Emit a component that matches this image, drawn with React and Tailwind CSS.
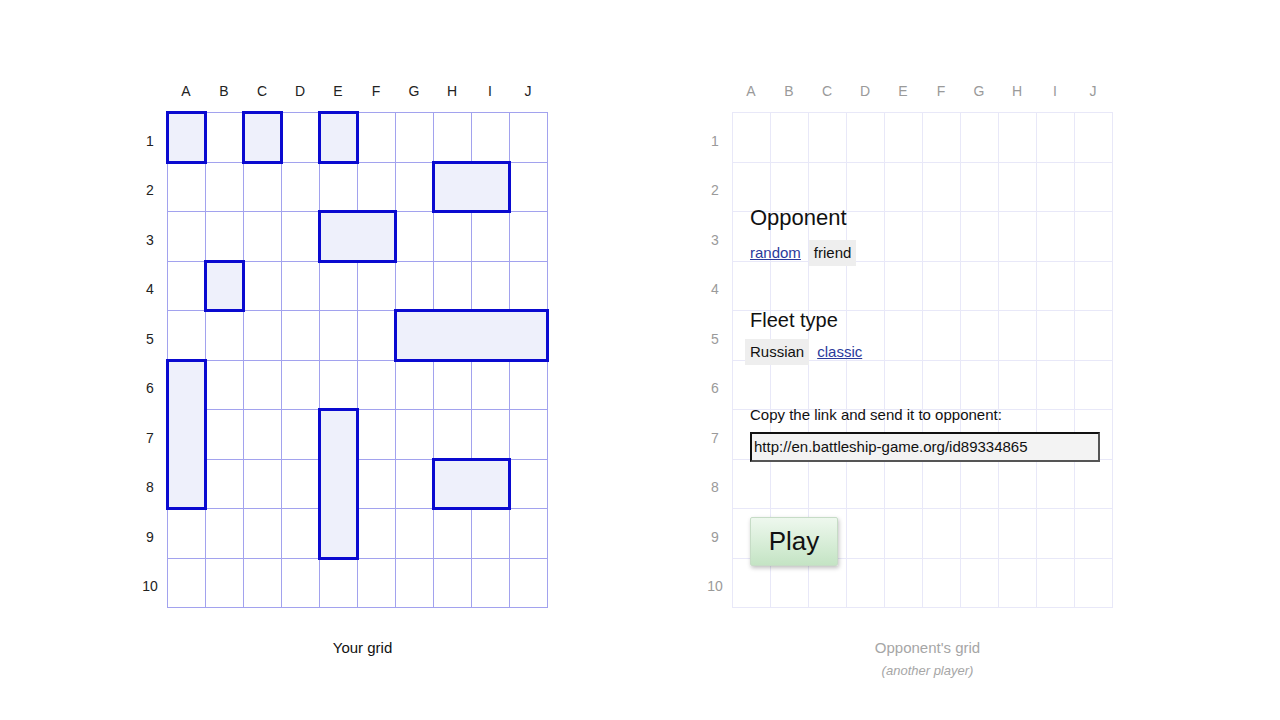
const COLS = ['A', 'B', 'C', 'D', 'E', 'F', 'G', 'H', 'I', 'J']
const ROWS = [1, 2, 3, 4, 5, 6, 7, 8, 9, 10]

// [col, row, width, height] zero-based
const SHIPS = [
  [0, 0, 1, 1],
  [2, 0, 1, 1],
  [4, 0, 1, 1],
  [7, 1, 2, 1],
  [4, 2, 2, 1],
  [1, 3, 1, 1],
  [6, 4, 4, 1],
  [0, 5, 1, 3],
  [4, 6, 1, 3],
  [7, 7, 2, 1],
]

function Board({ mine, children }) {
  const label = mine ? 'text-[#222]' : 'text-[#9a9a9a]'
  const line = mine ? 'border-[#a2a2ee]' : 'border-[#e8e8f8]'
  return (
    <div className="flex flex-col">
      <div className="flex">
        <div className="w-[34px]" />
        <div className={`flex h-[42px] w-[381px] items-center text-[14px] ${label}`}>
          {COLS.map((c) => (
            <div key={c} className="w-[38px] text-center">{c}</div>
          ))}
        </div>
      </div>
      <div className="flex">
        <div className={`grid w-[34px] grid-rows-[50px_49px_50px_49px_50px_49px_50px_49px_50px_49px] pt-px text-[14px] ${label}`}>
          {ROWS.map((r) => (
            <div key={r} className="flex items-center justify-center pt-[6px]">{r}</div>
          ))}
        </div>
        <div className="relative">
          <div className={`grid h-[496px] w-[381px] grid-cols-10 grid-rows-[50px_49px_50px_49px_50px_49px_50px_49px_50px_49px] border-l border-t ${line}`}>
            {ROWS.map((r, ri) =>
              COLS.map((c, ci) => (
                <div
                  key={c + r}
                  className={`border-b border-r ${line}`}
                  style={{ gridColumn: ci + 1, gridRow: ri + 1 }}
                />
              ))
            )}
            {mine &&
              SHIPS.map(([c, r, w, h], i) => (
                <div
                  key={i}
                  className="relative z-10 -mb-[1px] -ml-[2px] -mr-[1px] -mt-[2px] border-[3px] border-[#0a0ad0] bg-[#eef0fb]"
                  style={{ gridColumn: `${c + 1} / span ${w}`, gridRow: `${r + 1} / span ${h}` }}
                />
              ))}
          </div>
          {children}
        </div>
      </div>
    </div>
  )
}

function Option({ active, children }) {
  return active ? (
    <span className="mr-[3px] inline-block bg-[#eeeeee] px-[5px] py-[3px] leading-[20px] text-[#111]">{children}</span>
  ) : (
    <span className="mr-[3px] inline-block px-[5px] py-[3px] leading-[20px] text-[#2b3a9b] underline">{children}</span>
  )
}

export default function App() {
  return (
    <div className="min-h-[720px] w-[1280px] bg-white font-['Liberation_Sans',Arial,sans-serif]">
      <div className="flex gap-[150px] pl-[133px] pt-[70px]">
        <div className="flex flex-col">
          <Board mine />
          <div className="mt-[31px] pl-[44px] text-center text-[15px] leading-[18px] text-[#111]">Your grid</div>
        </div>
        <div className="flex flex-col">
          <Board>
            <div className="absolute inset-0 pl-[18px] pt-[93px] text-[#111]">
              <div className="text-[22px] leading-[26px]">Opponent</div>
              <div className="-ml-[5px] mt-[9px] text-[15px]">
                <Option>random</Option>
                <Option active>friend</Option>
              </div>
              <div className="mt-[42px] text-[20px] leading-[24px]">Fleet type</div>
              <div className="-ml-[5px] mt-[7px] text-[15px]">
                <Option active>Russian</Option>
                <Option>classic</Option>
              </div>
              <div className="mt-[41px] text-[15px] leading-[18px]">Copy the link and send it to opponent:</div>
              <div className="mt-[8px] flex h-[30px] w-[350px] items-center border-2 border-b-[#555] border-l-[#111] border-r-[#555] border-t-[#111] bg-[#f3f3f3] pl-[2px] text-[15px]">
                http://en.battleship-game.org/id89334865
              </div>
              <button className="mt-[55px] flex h-[49px] w-[88px] items-center justify-center rounded-[2px] border border-[#c6dcc6] bg-gradient-to-b from-[#eef8ee] to-[#c4e4c4] text-[26px] text-[#111] shadow-[1px_2px_4px_rgba(0,0,0,0.25)]">
                Play
              </button>
            </div>
          </Board>
          <div className="mt-[31px] pl-[44px] text-center text-[15px] leading-[18px] text-[#a6a6a6]">Opponent&apos;s grid</div>
          <div className="mt-[6px] pl-[44px] text-center text-[13px] italic leading-[16px] text-[#a6a6a6]">(another player)</div>
        </div>
      </div>
    </div>
  )
}
